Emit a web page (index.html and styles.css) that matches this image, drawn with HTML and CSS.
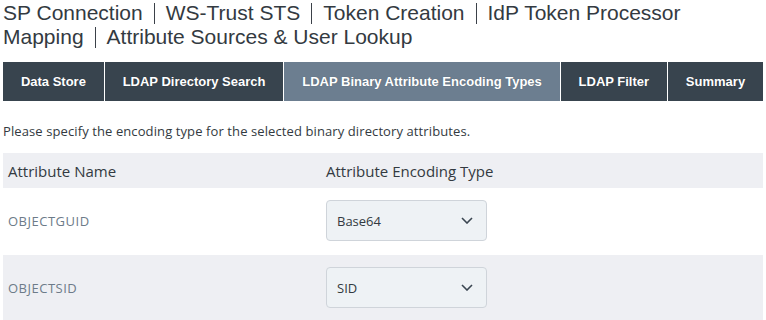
FILE: index.html
```html
<!DOCTYPE html>
<html lang="en">
<head>
  <meta charset="UTF-8" />
  <title>LDAP Binary Attribute Encoding Types</title>
  <link rel="stylesheet" href="styles.css">
</head>
<body>

  <h1 class="crumbs">
    <span>SP Connection</span><span class="sep"></span><span>WS-Trust STS</span><span class="sep"></span><span>Token Creation</span><span class="sep"></span><span>IdP Token Processor</span> <span>Mapping</span><span class="sep"></span><span>Attribute Sources &amp; User Lookup</span>
  </h1>

  <nav class="tabs">
    <div class="tab">Data Store</div>
    <div class="tab">LDAP Directory Search</div>
    <div class="tab active">LDAP Binary Attribute Encoding Types</div>
    <div class="tab">LDAP Filter</div>
    <div class="tab">Summary</div>
  </nav>

  <p class="intro">Please specify the encoding type for the selected binary directory attributes.</p>

  <div class="table">
    <div class="row head">
      <div class="cell">Attribute Name</div>
      <div class="cell">Attribute Encoding Type</div>
    </div>
    <div class="row">
      <div class="cell name">OBJECTGUID</div>
      <div class="cell">
        <div class="select">Base64
          <svg class="chev" width="12" height="7" viewBox="0 0 12 7"><path d="M1 1l5 5 5-5" fill="none" stroke="#3b4651" stroke-width="1.6"/></svg>
        </div>
      </div>
    </div>
    <div class="row alt">
      <div class="cell name">OBJECTSID</div>
      <div class="cell">
        <div class="select">SID
          <svg class="chev" width="12" height="7" viewBox="0 0 12 7"><path d="M1 1l5 5 5-5" fill="none" stroke="#3b4651" stroke-width="1.6"/></svg>
        </div>
      </div>
    </div>
  </div>

</body>
</html>
```

FILE: styles.css
```css
body {
  margin: 0;
  padding: 0 3px;
  font-family: "Open Sans", Arial, sans-serif;
  color: #333a41;
}
.crumbs {
  margin: 0;
  font-family: "Liberation Sans", Arial, sans-serif;
  font-size: 21px;
  font-weight: normal;
  line-height: 24px;
  padding-top: 1px;
}
.sep {
  display: inline-block;
  width: 1px;
  height: 21px;
  background: #3b4149;
  margin: 0 11px;
  vertical-align: -4px;
}
.tabs {
  display: flex;
  gap: 1px;
  margin-top: 13px;
  height: 39px;
}
.tab {
  flex: 1 1 auto;
  display: flex;
  align-items: center;
  justify-content: center;
  padding: 0 17px;
  background: #38444e;
  color: #fff;
  font-family: "Liberation Sans", Arial, sans-serif;
  font-weight: bold;
  font-size: 13px;
  white-space: nowrap;
  text-shadow: 0 0 1px rgba(0, 0, 0, 0.25);
}
.tab.active {
  background: #6c7e90;
}
.intro {
  margin: 21px 0 13px;
  font-size: 13px;
  line-height: 18px;
  letter-spacing: 0.1px;
}
.row {
  display: grid;
  grid-template-columns: 318px 1fr;
  align-items: center;
  padding: 12px 5px 14px;
}
.row.head {
  padding: 0 5px;
  height: 35px;
  background: #eeeff3;
  font-size: 15px;
}
.row.alt {
  background: #eeeff3;
}
.name {
  font-size: 13px;
  letter-spacing: 0.5px;
  color: #6d7b89;
}
.select {
  width: 161px;
  height: 41px;
  box-sizing: border-box;
  border: 1px solid #cfd4da;
  border-radius: 4px;
  background: #eef2f5;
  display: flex;
  align-items: center;
  justify-content: space-between;
  padding: 0 13px 0 10px;
  font-size: 13px;
}
.chev {
  display: block;
}
```
